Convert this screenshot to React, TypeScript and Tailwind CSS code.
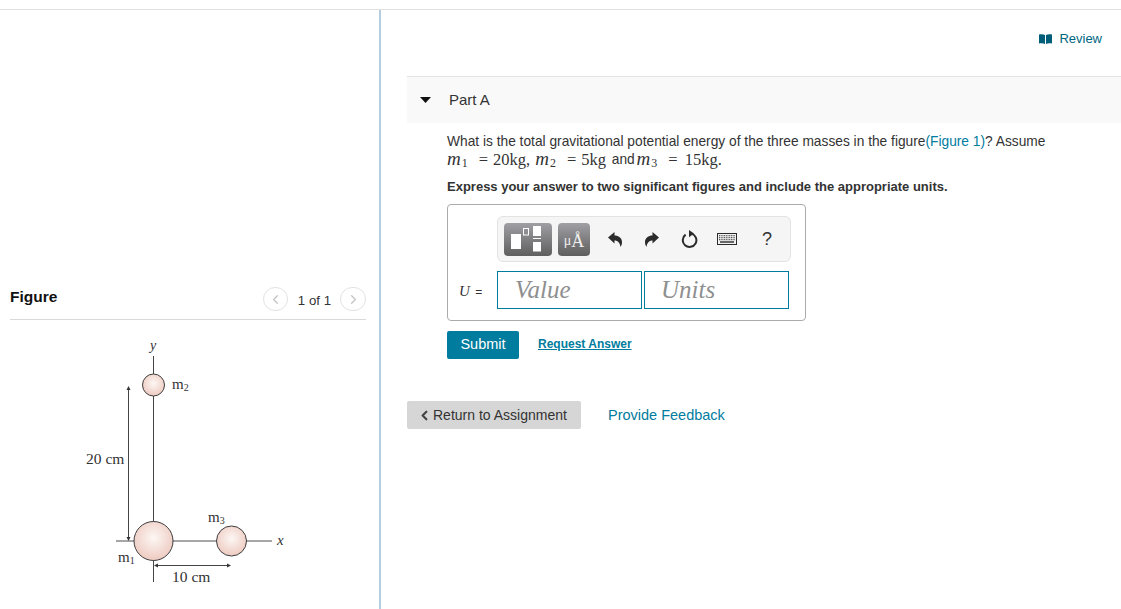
import { ChevronLeft, ChevronRight } from "lucide-react";

const sans = "font-['Liberation_Sans',Arial,sans-serif]";
const serif = "font-['Liberation_Serif','Times_New_Roman',serif]";

function Ball({ cx, cy, r, id }: { cx: number; cy: number; r: number; id: string }) {
  return (
    <>
      <defs>
        <radialGradient id={id} cx="50%" cy="42%" r="60%">
          <stop offset="0%" stopColor="#fdf7f4" />
          <stop offset="100%" stopColor="#edc9bf" />
        </radialGradient>
      </defs>
      <circle cx={cx} cy={cy} r={r} fill={`url(#${id})`} stroke="#3d3d3d" strokeWidth="1" />
    </>
  );
}

function MassFigure() {
  return (
    <svg width="210" height="255" viewBox="80 340 210 255" className="block">
      <g fontFamily="Liberation Serif, serif" fontSize="15" fill="#333">
        <line x1="153.5" y1="357" x2="153.5" y2="583" stroke="#444" strokeWidth="1" />
        <line x1="116" y1="542" x2="272" y2="542" stroke="#888" strokeWidth="1.5" />
        <line x1="128.5" y1="390" x2="128.5" y2="540" stroke="#444" strokeWidth="1" />
        <path d="M128.5 387 l-2 4 h4 z M128.5 542 l-2 -4 h4 z" fill="#333" />
        <line x1="155" y1="566.5" x2="230" y2="566.5" stroke="#444" strokeWidth="1" />
        <path d="M154 566.5 l4 -2 v4 z M231 566.5 l-4 -2 v4 z" fill="#333" />
        <Ball id="b2" cx={153.5} cy={386} r={11} />
        <Ball id="b1" cx={153.5} cy={542} r={19.5} />
        <Ball id="b3" cx={231.5} cy={542} r={15} />
        <text x="150" y="351" fontStyle="italic" fontSize="14">y</text>
        <text x="172" y="390">m<tspan fontSize="10" dy="2">2</tspan></text>
        <text x="86" y="465" fontSize="15.5">20 cm</text>
        <text x="208" y="523">m<tspan fontSize="10" dy="2">3</tspan></text>
        <text x="118" y="563">m<tspan fontSize="10" dy="2">1</tspan></text>
        <text x="277" y="546" fontStyle="italic">x</text>
        <text x="172" y="583" fontSize="15.5">10 cm</text>
      </g>
    </svg>
  );
}

function FigurePanel() {
  return (
    <div className="w-[381px] shrink-0 border-r-2 border-[#b5cde0] pl-[10px] pr-[13px] pt-[275px]">
      <div className="flex h-[35px] items-start justify-between border-b border-[#d9d9d9]">
        <span className="pt-px text-[15.5px] font-bold leading-[22px] text-[#111]">Figure</span>
        <div className="flex items-start pt-[2px] text-[13.25px] text-[#333]">
          <span className="flex h-[24px] w-[25px] items-center justify-center rounded-full border border-[#e2e2e2]">
            <ChevronLeft size={15} className="text-[#c4c4c4]" />
          </span>
          <span className="ml-[10px] mr-[9px] pt-[4px] leading-[20px]">1 of 1</span>
          <span className="flex h-[24px] w-[26px] items-center justify-center rounded-full border border-[#e2e2e2]">
            <ChevronRight size={15} className="text-[#c4c4c4]" />
          </span>
        </div>
      </div>
      <div className="ml-[70px] mt-[19px]">
        <MassFigure />
      </div>
    </div>
  );
}

function Toolbar() {
  return (
    <div className="flex h-[46px] w-[294px] items-center rounded-[6px] border border-[#e3e3e3] bg-[#f5f5f5] pl-[6px]">
      <div className="flex h-[33px] w-[48px] items-center justify-center rounded-[4px] bg-gradient-to-b from-[#a09fa4] to-[#5f5f5f]">
        <svg width="48" height="33" viewBox="0 0 48 33">
          <rect x="7" y="11" width="10" height="15" fill="#fff" />
          <rect x="19.5" y="5.5" width="5" height="6.5" fill="none" stroke="#fff" strokeWidth="1" />
          <rect x="29" y="3" width="8" height="10" fill="#fff" />
          <rect x="29" y="15" width="8" height="1" fill="#fff" />
          <rect x="29" y="19" width="8" height="9.5" fill="#fff" />
        </svg>
      </div>
      <div className={`ml-[6px] flex h-[33px] w-[32px] items-end justify-center rounded-[4px] bg-gradient-to-b from-[#a09fa4] to-[#5f5f5f] pb-[5px] leading-[20px] text-[#f0f0f0] ${serif}`}>
        <span className="text-[14px]">μ</span>
        <span className="text-[18px]">Å</span>
      </div>
      <svg width="14" height="15" viewBox="0 0 14 15" className="ml-[18px]">
        <path d="M0 5.5 L6.5 0 V3.5 C10.5 3.5 14 6 14 10 C14 12 13.5 13.5 12.5 15 C12 11 10 8.5 6.5 8.5 V11.5 Z" fill="#2b2b2b" />
      </svg>
      <svg width="14" height="15" viewBox="0 0 14 15" className="ml-[23px]">
        <path d="M14 5.5 L7.5 0 V3.5 C3.5 3.5 0 6 0 10 C0 12 0.5 13.5 1.5 15 C2 11 4 8.5 7.5 8.5 V11.5 Z" fill="#2b2b2b" />
      </svg>
      <svg width="17" height="18" viewBox="0 0 17 18" className="ml-[22px]">
        <path d="M10.5 3.6 A6.8 6.8 0 1 1 4.6 4.6" fill="none" stroke="#2b2b2b" strokeWidth="2" />
        <path d="M8 0 L13 3.6 L8 7.2 Z" fill="#2b2b2b" />
      </svg>
      <svg width="20" height="12" viewBox="0 0 20 12" className="ml-[19px]">
        <rect x="0.5" y="0.5" width="19" height="11" fill="#f2f2f2" stroke="#2b2b2b" />
        <path d="M2 2.7 H18 M2 4.7 H18 M2 6.7 H18" stroke="#555" strokeWidth="1.2" strokeDasharray="1 0.7" />
        <rect x="3" y="8.2" width="14" height="1.6" fill="#444" />
      </svg>
      <span className="ml-[25px] text-[18px] leading-none text-[#333]">?</span>
    </div>
  );
}

function AnswerBox() {
  return (
    <div className="ml-[40px] mt-[8px] w-[359px] rounded-[4px] border border-[#ababab] pb-[11px] pl-[49px] pt-[11px]">
      <Toolbar />
      <div className="relative mt-[9px] flex gap-[2px]">
        <span className={`absolute left-[-38px] top-[9px] text-[14px] text-[#333] ${serif}`}>
          <i className="text-[15px]">U</i> <span className={`ml-[2px] text-[12px] ${sans}`}>=</span>
        </span>
        <div className={`flex h-[38px] w-[145px] items-center border border-[#007c9e] pl-[17px] text-[25px] italic text-[#8f8f8f] ${serif}`}>Value</div>
        <div className={`flex h-[38px] w-[145px] items-center border border-[#007c9e] pl-[16px] text-[25px] italic text-[#8f8f8f] ${serif}`}>Units</div>
      </div>
    </div>
  );
}

function Mass({ n }: { n: number }) {
  return (
    <>
      <i className="text-[19px] leading-[12px]">m</i>
      <span className="relative top-[2px] ml-[1px] text-[12px] leading-[12px]">{n}</span>
    </>
  );
}

function MathEq() {
  return <span className="ml-[11px] mr-[5px]">=</span>;
}

function PartContent() {
  return (
    <div className="pt-[10px] text-[13.75px] text-[#333]">
      <p className="ml-[40px] leading-[18px]">
        What is the total gravitational potential energy of the three masses in the figure
        <span className="text-[#007c9e]">(Figure 1)</span>? Assume
        <br />
        <span className={`relative top-px text-[16.5px] leading-[12px] ${serif}`}>
          <Mass n={1} />
          <MathEq />20kg,<span className="ml-[5px]" />
          <Mass n={2} />
          <MathEq />5kg
        </span>{" "}
        <span className="ml-[2px]">and</span>{" "}
        <span className={`relative top-px -ml-[2px] text-[16.5px] leading-[12px] ${serif}`}>
          <Mass n={3} />
          <span className="ml-[11px] mr-[7px]">=</span>15kg.
        </span>
      </p>
      <p className="ml-[40px] mt-[9px] text-[13px] font-bold leading-[18px] text-[#333]">
        Express your answer to two significant figures and include the appropriate units.
      </p>
      <AnswerBox />
      <div className="ml-[40px] mt-[10px] flex items-center">
        <button className="h-[28px] w-[72px] rounded-[2px] bg-[#007c9e] text-[14.5px] text-white">Submit</button>
        <a className="ml-[19px] -translate-y-px text-[12px] font-bold text-[#007c9e] underline">Request Answer</a>
      </div>
    </div>
  );
}

export default function App() {
  return (
    <div className={`h-[609px] w-[1121px] overflow-hidden bg-white pt-[9px] ${sans}`}>
      <div className="flex h-[600px] border-t border-[#e0e0e0]">
        <FigurePanel />
        <div className="flex-1 pl-[26px]">
          <div className="flex h-[66px] items-start justify-end pr-[19px] pt-[21px]">
            <a className="flex items-center gap-[7px] text-[13px] leading-4 text-[#006680]">
              <svg width="13" height="10" viewBox="0 0 13 10">
                <path d="M0 0.5 C2 0 4.5 0 6 1 V10 C4.5 9 2 9 0 9.5 Z M7 1 C8.5 0 11 0 13 0.5 V9.5 C11 9 8.5 9 7 10 Z" fill="#005e78" />
              </svg>
              Review
            </a>
          </div>
          <div className="flex h-[47px] items-center border-t border-[#e3e3e3] bg-[#f9f9f9] pl-[13px]">
            <svg width="11" height="6" viewBox="0 0 11 6">
              <path d="M0 0 H11 L5.5 6 Z" fill="#111" />
            </svg>
            <span className="ml-[18px] text-[15px] text-[#333]">Part A</span>
          </div>
          <PartContent />
          <div className="mt-[42px] flex items-center">
            <button className="flex h-[28px] w-[174px] items-center rounded-[2px] bg-[#d6d6d6] pl-[10px] text-[14px] text-[#333]">
              <ChevronLeft size={15} strokeWidth={3.5} className="mr-[1px] text-[#444]" />
              Return to Assignment
            </button>
            <a className="ml-[27px] translate-y-px text-[14.5px] text-[#007c9e]">Provide Feedback</a>
          </div>
        </div>
      </div>
    </div>
  );
}
